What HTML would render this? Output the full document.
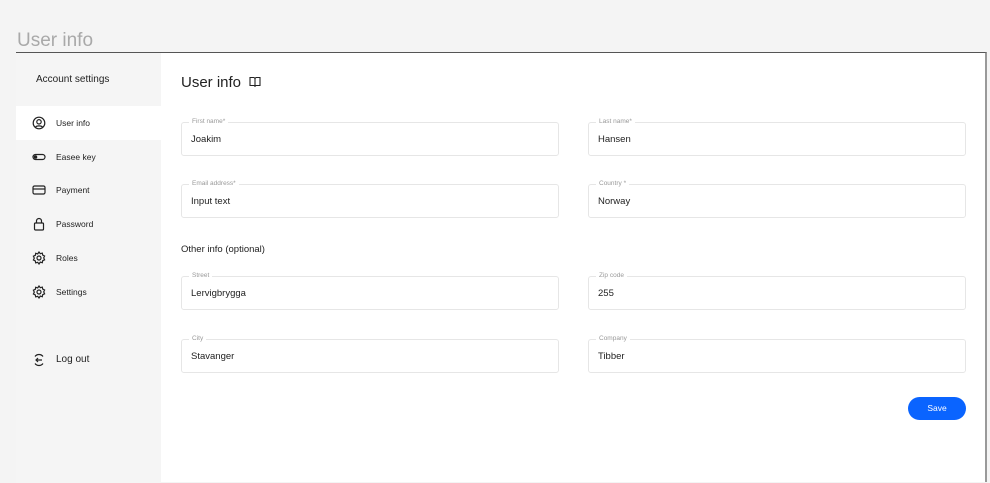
<!DOCTYPE html>
<html><head><style>
*{box-sizing:border-box;margin:0;padding:0}
body{width:990px;height:478px;background:#f4f4f4;font-family:"Liberation Sans",sans-serif;position:relative;overflow:hidden;color:#222}
.title{position:absolute;left:17px;top:30px;font-size:19px;color:#a9a9a9}
.frame{position:absolute;left:16px;top:52px;width:971px;height:430px;border-top:1px solid #555;border-right:2px solid #999;background:#fff}
.side{position:absolute;left:16px;top:53px;width:145px;height:430px;background:#f5f5f5}
.side h3{position:absolute;left:20px;top:21px;font-size:10px;font-weight:normal;color:#222}
.item{position:absolute;left:0;width:145px;height:34px;font-size:8.5px;color:#222}
.item.act{background:#fff}
.item span{position:absolute;left:40px;top:12px}
.item svg{position:absolute;left:16px;top:10px}
h1{position:absolute;left:181px;top:74px;font-size:15px;font-weight:normal;color:#222}
.f{position:absolute;width:378px;height:34px;border:1px solid #e6e6e6;border-radius:3px;background:#fff}
.f label{position:absolute;left:7px;top:-5px;font-size:6.5px;color:#999;background:#fff;padding:0 3px}
.f div{position:absolute;left:9px;top:11px;font-size:9.5px;color:#222}
.sub{position:absolute;left:181px;top:244px;font-size:9.5px}
.btn{position:absolute;left:908px;top:397px;width:58px;height:23px;border-radius:12px;background:#0a64ff;color:#fff;font-size:8.5px;text-align:center;line-height:23px}
</style></head><body>
<div class="title">User info</div>
<div class="frame"></div>
<div class="side">
<h3>Account settings</h3>
<div class="item act" style="top:53px"><svg width="14" height="14" viewBox="0 0 14 14" fill="none" stroke="#222" stroke-width="1.2"><circle cx="7" cy="7" r="5.8"/><circle cx="7" cy="5.8" r="2.2"/><path d="M3.5 11.2c1-1.8 6-1.8 7 0"/></svg><span>User info</span></div>
<div class="item" style="top:87px"><svg width="14" height="14" viewBox="0 0 14 14" fill="none" stroke="#222" stroke-width="1.2"><rect x="1" y="4.5" width="12" height="5" rx="2.5"/><circle cx="3.5" cy="7" r="1.2" fill="#222"/></svg><span>Easee key</span></div>
<div class="item" style="top:120px"><svg width="14" height="14" viewBox="0 0 14 14" fill="none" stroke="#222" stroke-width="1.2"><rect x="1" y="3" width="12" height="8" rx="1.5"/><path d="M1 6h12"/></svg><span>Payment</span></div>
<div class="item" style="top:154px"><svg width="14" height="14" viewBox="0 0 14 14" fill="none" stroke="#222" stroke-width="1.2"><rect x="2.5" y="6" width="9" height="7" rx="1"/><path d="M4.5 6V4a2.5 2.5 0 0 1 5 0v2"/></svg><span>Password</span></div>
<div class="item" style="top:188px"><svg width="14" height="14" viewBox="0 0 14 14" fill="none" stroke="#222" stroke-width="1.2"><circle cx="7" cy="7" r="2"/><path d="M7 1l1.3 1.7 2-.6.4 2 1.9.9-.9 1.9.9 1.9-1.9.9-.4 2-2-.6L7 13l-1.3-1.7-2 .6-.4-2-1.9-.9.9-1.9-.9-1.9 1.9-.9.4-2 2 .6z"/></svg><span>Roles</span></div>
<div class="item" style="top:222px"><svg width="14" height="14" viewBox="0 0 14 14" fill="none" stroke="#222" stroke-width="1.2"><circle cx="7" cy="7" r="2"/><path d="M7 1l1.3 1.7 2-.6.4 2 1.9.9-.9 1.9.9 1.9-1.9.9-.4 2-2-.6L7 13l-1.3-1.7-2 .6-.4-2-1.9-.9.9-1.9-.9-1.9 1.9-.9.4-2 2 .6z"/></svg><span>Settings</span></div>
<div class="item" style="top:290px"><svg width="14" height="14" viewBox="0 0 14 14" fill="none" stroke="#222" stroke-width="1.2"><path d="M3 3.5A5 5 0 0 1 11 3.5M3 10.5A5 5 0 0 0 11 10.5M10 7H4M6 5L4 7l2 2"/></svg><span style="font-size:10px;top:11px">Log out</span></div>
</div>
<h1>User info <svg width="12" height="11" viewBox="0 0 12 11" fill="none" stroke="#222" stroke-width="1.1" style="margin-left:4px"><path d="M1 1.5h4l1 1 1-1h4v8H7l-1 .8-1-.8H1z M6 2.5v7.5"/></svg></h1>
<div class="f" style="left:181px;top:122px"><label>First name*</label><div>Joakim</div></div>
<div class="f" style="left:588px;top:122px"><label>Last name*</label><div>Hansen</div></div>
<div class="f" style="left:181px;top:184px"><label>Email address*</label><div>Input text</div></div>
<div class="f" style="left:588px;top:184px"><label>Country *</label><div>Norway</div></div>
<div class="sub">Other info (optional)</div>
<div class="f" style="left:181px;top:276px"><label>Street</label><div>Lervigbrygga</div></div>
<div class="f" style="left:588px;top:276px"><label>Zip code</label><div>255</div></div>
<div class="f" style="left:181px;top:339px"><label>City</label><div>Stavanger</div></div>
<div class="f" style="left:588px;top:339px"><label>Company</label><div>Tibber</div></div>
<div class="btn">Save</div>
</body></html>
